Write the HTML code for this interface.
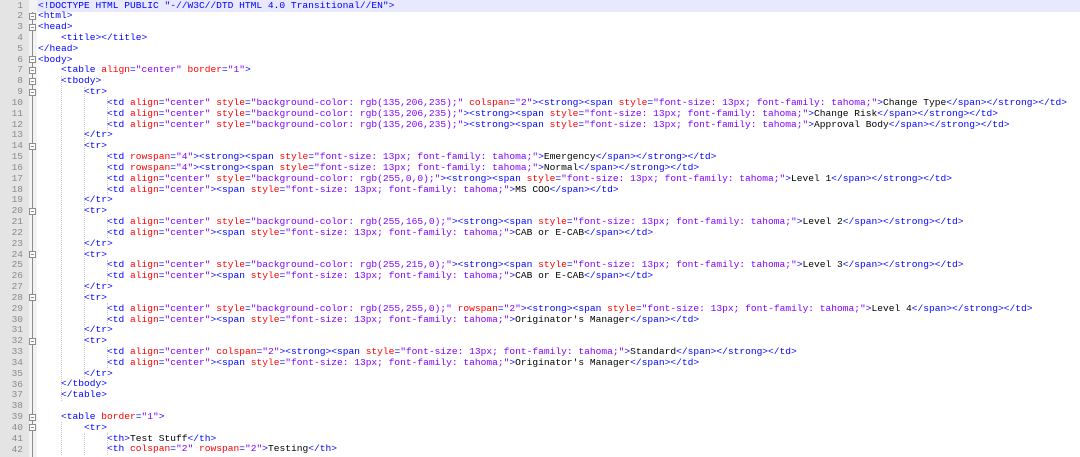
<!DOCTYPE html>
<html><head><style>
body{margin:0;width:1080px;height:457px;overflow:hidden;background:#fff;position:relative}
#g{position:absolute;left:0;top:0;width:29px;height:457px;background:#e4e4e4}
#f{position:absolute;left:29px;top:0;width:8px;height:457px;background:#f3f3f3}
#hl{position:absolute;left:37px;top:0;width:1043px;height:12px;background:#e8e8ff}
.n{position:absolute;left:0;width:23px;text-align:right;font:9.5px "Liberation Mono",monospace;color:#8a8a8a;line-height:10.83px}
pre{position:absolute;left:38px;top:0.5px;margin:0;font:9.58px "Liberation Mono",monospace;line-height:10.83px;color:#000}
.t{color:#0000ff}.a{color:#ff0000}.v{color:#8000ff}
.fb{position:absolute;left:29px;width:7px;height:7px;border:1px solid #8c8c8c;box-sizing:border-box;background:#fff}
.fb:after{content:"";position:absolute;left:1px;top:2px;width:3px;height:1px;background:#8c8c8c}
.fl{position:absolute;left:32px;width:1px;background:#8c8c8c}
.ig{position:absolute;width:0;border-left:1px dotted #c8c8c8}
</style></head><body>
<div id="g"></div><div id="f"></div><div id="hl"></div>
<div class="fl" style="top:12px;height:445px"></div>
<div id="nums"></div>
<pre id="code"><span class="t">&lt;!DOCTYPE HTML PUBLIC "-//W3C//DTD HTML 4.0 Transitional//EN"&gt;</span>
<span class="t">&lt;html&gt;</span>
<span class="t">&lt;head&gt;</span>
    <span class="t">&lt;title&gt;&lt;/title&gt;</span>
<span class="t">&lt;/head&gt;</span>
<span class="t">&lt;body&gt;</span>
    <span class="t">&lt;table </span><span class="a">align</span><span class="t">=</span><span class="v">"center"</span> <span class="a">border</span><span class="t">=</span><span class="v">"1"</span><span class="t">&gt;</span>
    <span class="t">&lt;tbody&gt;</span>
        <span class="t">&lt;tr&gt;</span>
            <span class="t">&lt;td </span><span class="a">align</span><span class="t">=</span><span class="v">"center"</span> <span class="a">style</span><span class="t">=</span><span class="v">"background-color: rgb(135,206,235);"</span> <span class="a">colspan</span><span class="t">=</span><span class="v">"2"</span><span class="t">&gt;&lt;strong&gt;&lt;span </span><span class="a">style</span><span class="t">=</span><span class="v">"font-size: 13px; font-family: tahoma;"</span><span class="t">&gt;</span>Change Type<span class="t">&lt;/span&gt;&lt;/strong&gt;&lt;/td&gt;</span>
            <span class="t">&lt;td </span><span class="a">align</span><span class="t">=</span><span class="v">"center"</span> <span class="a">style</span><span class="t">=</span><span class="v">"background-color: rgb(135,206,235);"</span><span class="t">&gt;&lt;strong&gt;&lt;span </span><span class="a">style</span><span class="t">=</span><span class="v">"font-size: 13px; font-family: tahoma;"</span><span class="t">&gt;</span>Change Risk<span class="t">&lt;/span&gt;&lt;/strong&gt;&lt;/td&gt;</span>
            <span class="t">&lt;td </span><span class="a">align</span><span class="t">=</span><span class="v">"center"</span> <span class="a">style</span><span class="t">=</span><span class="v">"background-color: rgb(135,206,235);"</span><span class="t">&gt;&lt;strong&gt;&lt;span </span><span class="a">style</span><span class="t">=</span><span class="v">"font-size: 13px; font-family: tahoma;"</span><span class="t">&gt;</span>Approval Body<span class="t">&lt;/span&gt;&lt;/strong&gt;&lt;/td&gt;</span>
        <span class="t">&lt;/tr&gt;</span>
        <span class="t">&lt;tr&gt;</span>
            <span class="t">&lt;td </span><span class="a">rowspan</span><span class="t">=</span><span class="v">"4"</span><span class="t">&gt;&lt;strong&gt;&lt;span </span><span class="a">style</span><span class="t">=</span><span class="v">"font-size: 13px; font-family: tahoma;"</span><span class="t">&gt;</span>Emergency<span class="t">&lt;/span&gt;&lt;/strong&gt;&lt;/td&gt;</span>
            <span class="t">&lt;td </span><span class="a">rowspan</span><span class="t">=</span><span class="v">"4"</span><span class="t">&gt;&lt;strong&gt;&lt;span </span><span class="a">style</span><span class="t">=</span><span class="v">"font-size: 13px; font-family: tahoma;"</span><span class="t">&gt;</span>Normal<span class="t">&lt;/span&gt;&lt;/strong&gt;&lt;/td&gt;</span>
            <span class="t">&lt;td </span><span class="a">align</span><span class="t">=</span><span class="v">"center"</span> <span class="a">style</span><span class="t">=</span><span class="v">"background-color: rgb(255,0,0);"</span><span class="t">&gt;&lt;strong&gt;&lt;span </span><span class="a">style</span><span class="t">=</span><span class="v">"font-size: 13px; font-family: tahoma;"</span><span class="t">&gt;</span>Level 1<span class="t">&lt;/span&gt;&lt;/strong&gt;&lt;/td&gt;</span>
            <span class="t">&lt;td </span><span class="a">align</span><span class="t">=</span><span class="v">"center"</span><span class="t">&gt;&lt;span </span><span class="a">style</span><span class="t">=</span><span class="v">"font-size: 13px; font-family: tahoma;"</span><span class="t">&gt;</span>MS COO<span class="t">&lt;/span&gt;&lt;/td&gt;</span>
        <span class="t">&lt;/tr&gt;</span>
        <span class="t">&lt;tr&gt;</span>
            <span class="t">&lt;td </span><span class="a">align</span><span class="t">=</span><span class="v">"center"</span> <span class="a">style</span><span class="t">=</span><span class="v">"background-color: rgb(255,165,0);"</span><span class="t">&gt;&lt;strong&gt;&lt;span </span><span class="a">style</span><span class="t">=</span><span class="v">"font-size: 13px; font-family: tahoma;"</span><span class="t">&gt;</span>Level 2<span class="t">&lt;/span&gt;&lt;/strong&gt;&lt;/td&gt;</span>
            <span class="t">&lt;td </span><span class="a">align</span><span class="t">=</span><span class="v">"center"</span><span class="t">&gt;&lt;span </span><span class="a">style</span><span class="t">=</span><span class="v">"font-size: 13px; font-family: tahoma;"</span><span class="t">&gt;</span>CAB or E-CAB<span class="t">&lt;/span&gt;&lt;/td&gt;</span>
        <span class="t">&lt;/tr&gt;</span>
        <span class="t">&lt;tr&gt;</span>
            <span class="t">&lt;td </span><span class="a">align</span><span class="t">=</span><span class="v">"center"</span> <span class="a">style</span><span class="t">=</span><span class="v">"background-color: rgb(255,215,0);"</span><span class="t">&gt;&lt;strong&gt;&lt;span </span><span class="a">style</span><span class="t">=</span><span class="v">"font-size: 13px; font-family: tahoma;"</span><span class="t">&gt;</span>Level 3<span class="t">&lt;/span&gt;&lt;/strong&gt;&lt;/td&gt;</span>
            <span class="t">&lt;td </span><span class="a">align</span><span class="t">=</span><span class="v">"center"</span><span class="t">&gt;&lt;span </span><span class="a">style</span><span class="t">=</span><span class="v">"font-size: 13px; font-family: tahoma;"</span><span class="t">&gt;</span>CAB or E-CAB<span class="t">&lt;/span&gt;&lt;/td&gt;</span>
        <span class="t">&lt;/tr&gt;</span>
        <span class="t">&lt;tr&gt;</span>
            <span class="t">&lt;td </span><span class="a">align</span><span class="t">=</span><span class="v">"center"</span> <span class="a">style</span><span class="t">=</span><span class="v">"background-color: rgb(255,255,0);"</span> <span class="a">rowspan</span><span class="t">=</span><span class="v">"2"</span><span class="t">&gt;&lt;strong&gt;&lt;span </span><span class="a">style</span><span class="t">=</span><span class="v">"font-size: 13px; font-family: tahoma;"</span><span class="t">&gt;</span>Level 4<span class="t">&lt;/span&gt;&lt;/strong&gt;&lt;/td&gt;</span>
            <span class="t">&lt;td </span><span class="a">align</span><span class="t">=</span><span class="v">"center"</span><span class="t">&gt;&lt;span </span><span class="a">style</span><span class="t">=</span><span class="v">"font-size: 13px; font-family: tahoma;"</span><span class="t">&gt;</span>Originator's Manager<span class="t">&lt;/span&gt;&lt;/td&gt;</span>
        <span class="t">&lt;/tr&gt;</span>
        <span class="t">&lt;tr&gt;</span>
            <span class="t">&lt;td </span><span class="a">align</span><span class="t">=</span><span class="v">"center"</span> <span class="a">colspan</span><span class="t">=</span><span class="v">"2"</span><span class="t">&gt;&lt;strong&gt;&lt;span </span><span class="a">style</span><span class="t">=</span><span class="v">"font-size: 13px; font-family: tahoma;"</span><span class="t">&gt;</span>Standard<span class="t">&lt;/span&gt;&lt;/strong&gt;&lt;/td&gt;</span>
            <span class="t">&lt;td </span><span class="a">align</span><span class="t">=</span><span class="v">"center"</span><span class="t">&gt;&lt;span </span><span class="a">style</span><span class="t">=</span><span class="v">"font-size: 13px; font-family: tahoma;"</span><span class="t">&gt;</span>Originator's Manager<span class="t">&lt;/span&gt;&lt;/td&gt;</span>
        <span class="t">&lt;/tr&gt;</span>
    <span class="t">&lt;/tbody&gt;</span>
    <span class="t">&lt;/table&gt;</span>

    <span class="t">&lt;table </span><span class="a">border</span><span class="t">=</span><span class="v">"1"</span><span class="t">&gt;</span>
        <span class="t">&lt;tr&gt;</span>
            <span class="t">&lt;th&gt;</span>Test Stuff<span class="t">&lt;/th&gt;</span>
            <span class="t">&lt;th </span><span class="a">colspan</span><span class="t">=</span><span class="v">"2"</span> <span class="a">rowspan</span><span class="t">=</span><span class="v">"2"</span><span class="t">&gt;</span>Testing<span class="t">&lt;/th&gt;</span></pre>
<script>
var h='';for(var i=1;i<=42;i++){h+='<div class="n" style="top:'+(0.5+(i-1)*10.83)+'px">'+i+'</div>';}
[2,3,6,7,8,9,14,20,24,28,32,39,40].forEach(function(i){h+='<div class="fb" style="top:'+(2+(i-1)*10.83)+'px"></div>';});
var L=10.83,cw=5.748;
function ig(col,a,b){h+='<div class="ig" style="left:'+(38+col*cw)+'px;top:'+((a-1)*L)+'px;height:'+((b-a+1)*L)+'px"></div>';}
ig(4,8,37);ig(8,9,35);ig(12,10,12);ig(12,15,18);ig(12,21,22);ig(12,25,26);ig(12,29,30);ig(12,33,34);ig(4,40,42);ig(8,41,42);ig(12,41,42);
document.getElementById('nums').innerHTML=h;
</script>
</body></html>
